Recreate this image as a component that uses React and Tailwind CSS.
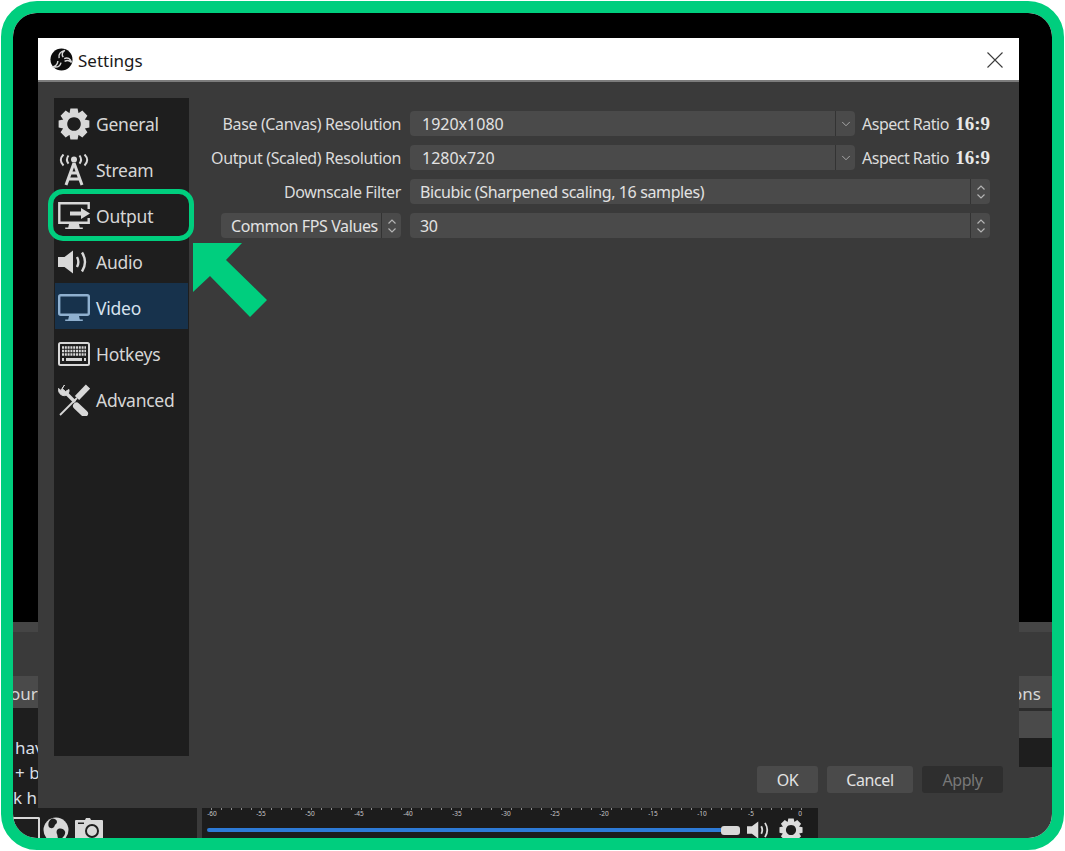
import { ChevronDown } from "lucide-react"

const font = { fontFamily: '"Noto Sans", "Open Sans", sans-serif' }

// 8 toothed gear, same shape in the sidebar and under the mixer
const gearPath = () => {
  const pts = []
  for (let i = 0; i < 8; i++) {
    const a = (i * Math.PI) / 4
    const list = [[-0.4, 11.6], [-0.23, 15.8], [0.23, 15.8], [0.4, 11.6]]
    list.forEach(([d, r]) => {
      pts.push(`${(16 + r * Math.sin(a + d)).toFixed(2)} ${(16 - r * Math.cos(a + d)).toFixed(2)}`)
    })
  }
  return `M${pts.join("L")}Z M16 9.2a6.8 6.8 0 1 0 .01 0Z`
}

const Gear = ({ className }) => (
  <svg viewBox="0 0 32 32" className={className}>
    <path d={gearPath()} fill="currentColor" fillRule="evenodd" />
  </svg>
)

const StreamIcon = () => (
  <svg viewBox="0 0 32 32" className="w-[32px] h-[32px]" fill="none" stroke="currentColor">
    <circle cx="16" cy="5.5" r="3" fill="currentColor" stroke="none" />
    <path d="M10.5 1.5c-2 2.6-2 5.6 0 8.2M21.5 1.5c2 2.6 2 5.6 0 8.2" strokeWidth="2" />
    <path d="M5.5 .5c-3.6 3.6-3.6 7.4 0 11M26.5 .5c3.6 3.6 3.6 7.4 0 11" strokeWidth="2" />
    <path d="M16 9 8 31M16 9l8 22M10.5 25h11M12.5 19h7" strokeWidth="3" />
  </svg>
)

const OutputIcon = () => (
  <svg viewBox="0 0 32 28" className="w-[32px] h-[28px]" fill="none">
    <path d="M30.7 7V1.3H1.3v19.4h29.4V16" stroke="currentColor" strokeWidth="2.4" />
    <path d="M11 22h10l.8 3.5h3V27H7.2v-1.5h3Z" fill="currentColor" />
    <path d="M12 9.5h11V6l9 5.5-9 5.5v-3.5H12Z" fill="currentColor" />
  </svg>
)

const AudioIcon = ({ className = "w-[32px] h-[26px]" }) => (
  <svg viewBox="0 0 32 26" className={className} fill="none">
    <path d="M0 8h6.5L15 1.5v23L6.5 18H0Z" fill="currentColor" />
    <path d="M19 8c1.8 3.3 1.8 6.7 0 10M24 3.5c3.8 6 3.8 13 0 19" stroke="currentColor" strokeWidth="2.4" />
  </svg>
)

const VideoIcon = () => (
  <svg viewBox="0 0 32 28" className="w-[32px] h-[28px]" fill="none">
    <rect x="1.2" y="1.2" width="29.6" height="19.6" rx="1.5" stroke="currentColor" strokeWidth="2.4" />
    <path d="M11 22h10l.8 3.5h3V27H7.2v-1.5h3Z" fill="currentColor" />
  </svg>
)

const KeyboardIcon = () => (
  <svg viewBox="0 0 32 24" className="w-[32px] h-[24px]" fill="none">
    <rect x="1" y="1" width="30" height="22" rx="1.5" stroke="currentColor" strokeWidth="2" />
    <path d="M4 5.5h24M4 9h24M4 12.5h24" stroke="currentColor" strokeWidth="2.4" strokeDasharray="2 .8" />
    <path d="M8 17.5h16M4 17.5h2M26 17.5h2" stroke="currentColor" strokeWidth="2.8" />
  </svg>
)

const ToolsIcon = () => (
  <svg viewBox="0 0 32 32" className="w-[32px] h-[32px]" fill="none">
    <path d="M30 2.5 19 14" stroke="currentColor" strokeWidth="6" />
    <path d="M19 14 2 31" stroke="currentColor" strokeWidth="1.8" />
    <path d="M18.5 22 26.5 29.5" stroke="currentColor" strokeWidth="7" strokeLinecap="round" />
    <path d="M9 10 17 18" stroke="currentColor" strokeWidth="3.4" />
    <path d="M6.5 1 4 4.5 7.5 7.5 11 5.5C11.5 9 9 12.5 5 11.5 1.5 10.5 .2 7.5 .5 4.5L3 6.5Z" fill="currentColor" stroke="currentColor" strokeWidth="1" strokeLinejoin="round" />
  </svg>
)

const ObsLogo = () => (
  <svg viewBox="0 0 24 24" className="w-[23px] h-[23px]">
    <circle cx="12" cy="12" r="11.5" fill="#0c0c0c" />
    <path d="M9.5 10.5C8.5 6.5 11 3.5 15.5 2.5 12.5 4.5 12 7 13.8 9.5" fill="none" stroke="#d8d8d8" strokeWidth="1.5" />
    <path d="M14.8 11C18.5 9.5 21 11 22.5 15 20 12.5 17.5 12.5 15.2 14" fill="none" stroke="#d8d8d8" strokeWidth="1.5" />
    <path d="M11.5 15.2C10.5 19 7.5 20.5 3.5 19.5 6.5 18.5 8 16.5 8.2 13.5" fill="none" stroke="#d8d8d8" strokeWidth="1.5" />
  </svg>
)

const Spinner = () => (
  <svg viewBox="0 0 10 16" className="w-[10px] h-[16px]" fill="none" stroke="#b4b4b4" strokeWidth="1.2">
    <path d="M1.5 5.5 5 2l3.5 3.5M1.5 10.5 5 14l3.5-3.5" />
  </svg>
)

const navItems = [
  { label: "General", icon: <Gear className="w-[32px] h-[32px]" /> },
  { label: "Stream", icon: <StreamIcon /> },
  { label: "Output", icon: <OutputIcon /> },
  { label: "Audio", icon: <AudioIcon /> },
  { label: "Video", icon: <VideoIcon />, active: true },
  { label: "Hotkeys", icon: <KeyboardIcon /> },
  { label: "Advanced", icon: <ToolsIcon /> },
]

const Sidebar = () => (
  <div className="w-[135px] bg-[#1e1e1e] pt-[1px] px-[1px] shrink-0">
    {navItems.map((item) => (
      <div
        key={item.label}
        className={`h-[46px] pt-[4px] flex items-center gap-[6px] pl-[3px] text-[17.5px] tracking-[-0.25px] ${item.active ? "bg-[#17324c]" : "text-[#d6d6d6]"}`}
      >
        <span className={`w-[32px] flex justify-center ${item.active ? "text-[#8fb0cf]" : "text-[#d8d8d8]"}`}>{item.icon}</span>
        <span className={item.active ? "text-[#d6e2ee]" : ""}>{item.label}</span>
      </div>
    ))}
  </div>
)

const Label = ({ children }) => (
  <div className="h-[25px] flex items-center justify-end text-[16px] tracking-[-0.38px] text-[#dcdcdc] whitespace-nowrap">{children}</div>
)

const Resolution = ({ value }) => (
  <div className="h-[25px] flex items-center">
    <div className="w-[445px] h-[25px] bg-[#4a4a4a] rounded-[4px] flex items-center text-[16px] text-[#e2e2e2]">
      <span className="flex-1 pl-[12px]">{value}</span>
      <span className="w-[20px] h-full border-l border-[#333333] flex items-center justify-center">
        <ChevronDown size={14} color="#b4b4b4" strokeWidth={1.5} />
      </span>
    </div>
    <div className="ml-[7px] w-[128px] h-[25px] flex justify-between items-center text-[16px] leading-none text-[#dcdcdc] whitespace-nowrap">
      <span className="tracking-[-0.5px]">Aspect Ratio</span>
      <b className="text-[19px] leading-none text-[#e8e8e8]" style={{ fontFamily: '"Liberation Serif", serif' }}>16:9</b>
    </div>
  </div>
)

const SpinField = ({ value }) => (
  <div className="h-[25px] bg-[#4a4a4a] rounded-[4px] flex items-center text-[16px] tracking-[-0.38px] text-[#e2e2e2]">
    <span className="flex-1 pl-[10px] whitespace-nowrap">{value}</span>
    <span className="w-[20px] h-full border-l border-[#333333] flex items-center justify-center">
      <Spinner />
    </span>
  </div>
)

const Dialog = () => (
  <div className="absolute left-[38px] top-[38px] w-[981px] h-[770px] flex flex-col bg-[#3a3a3a]">
    <div className="h-[44px] pt-[1px] bg-white border-b-2 border-[#7c7c7c] flex items-center pl-[12px] pr-[16px] shrink-0">
      <ObsLogo />
      <span className="ml-[5px] mt-[2px] text-[17px] text-[#1a1a1a]">Settings</span>
      <svg viewBox="0 0 16 16" className="ml-auto w-[16px] h-[16px]" fill="none" stroke="#3c3c3c" strokeWidth="1.1">
        <path d="M.5.5l15 15M15.5.5l-15 15" />
      </svg>
    </div>
    <div className="flex-1 flex pl-[16px] pt-[16px] pb-[52px]">
      <Sidebar />
      <div className="pl-[21px] pt-[13px]">
        <div className="grid grid-cols-[191px_580px] auto-rows-[25px] gap-x-[9px] gap-y-[9px]">
          <Label>Base (Canvas) Resolution</Label>
          <Resolution value="1920x1080" />
          <Label>Output (Scaled) Resolution</Label>
          <Resolution value="1280x720" />
          <Label>Downscale Filter</Label>
          <SpinField value="Bicubic (Sharpened scaling, 16 samples)" />
          <div className="w-[180px] justify-self-end">
            <SpinField value="Common FPS Values" />
          </div>
          <SpinField value="30" />
        </div>
      </div>
    </div>
    <div className="absolute right-[16px] bottom-[15px] flex gap-[9px] text-[16px] tracking-[-0.4px]">
      <div className="w-[61px] h-[27px] bg-[#4a4a4a] rounded-[3px] flex items-center justify-center text-[#e2e2e2]">OK</div>
      <div className="w-[86px] h-[27px] bg-[#4a4a4a] rounded-[3px] flex items-center justify-center text-[#e2e2e2]">Cancel</div>
      <div className="w-[81px] h-[27px] bg-[#2e2e2e] rounded-[3px] flex items-center justify-center text-[#787878]">Apply</div>
    </div>
  </div>
)

const meterLabels = ["-60", "-55", "-50", "-45", "-40", "-35", "-30", "-25", "-20", "-15", "-10", "-5", "0"]

const Mixer = () => (
  <div className="w-[616px] bg-[#1c1c1c] flex flex-col justify-end text-[#c8c8c8]">
    <div className="h-[2px] mx-[9px] bg-[repeating-linear-gradient(90deg,#8a8a8a_0,#8a8a8a_1px,transparent_1px,transparent_10px)]"></div>
    <div className="flex justify-between pl-[4px] pr-[12px] mb-[3px] text-[6.5px] leading-[8px]">
      {meterLabels.map((l) => (
        <span key={l} className="w-[12px] text-center">{l}</span>
      ))}
    </div>
    <div className="flex items-center h-[18px] pl-[5px] -mb-[1px]">
      <div className="w-[514px] h-[4px] bg-[#2d7ad6] rounded-l-[2px]"></div>
      <div className="w-[19px] h-[9px] bg-[#d8d8d8] rounded-[3px]"></div>
      <span className="ml-[7px] text-[#dcdcdc]"><AudioIcon className="w-[24px] h-[20px]" /></span>
      <span className="ml-[8px] text-[#dcdcdc]"><Gear className="w-[24px] h-[24px]" /></span>
    </div>
  </div>
)

const Background = () => (
  <div className="w-full h-full flex flex-col text-[#d6d6d6] text-[17px]">
    <div className="h-[609px] bg-black shrink-0"></div>
    <div className="h-[10px] bg-[#454545] shrink-0"></div>
    <div className="h-[44px] bg-[#3a3a3a] shrink-0"></div>
    <div className="h-[32px] pt-[3px] bg-[#4a4a4a] flex items-center justify-between shrink-0 pr-[11px]">
      <span className="-ml-[3px]">ources</span>
      <span>ons</span>
    </div>
    <div className="flex-1 flex min-h-0">
      <div className="w-[184px] bg-[#1e1e1e] flex flex-col overflow-hidden">
        <div className="pt-[27px] pl-[2px] leading-[25px] whitespace-nowrap text-[#d8dfe6]">
          <div>have</div>
          <div>+ b</div>
          <div className="-ml-[2px]">k h</div>
        </div>
        <div className="mt-[7px] flex items-start gap-[3px] text-[#d8d8d8]">
          <div className="w-[27px] h-[24px] border-2 border-l-0 border-[#d8d8d8] rounded-tr-[2px] shrink-0"></div>
          <svg viewBox="0 0 26 26" className="w-[26px] h-[26px] shrink-0">
            <circle cx="13" cy="13" r="12.5" fill="#d8d8d8" />
            <path d="M9 1.5c3 0 5 1.5 5 3.5s-2 2-2.5 4-3 3-5 1.5S5 3.5 9 1.5ZM15 12c3-1 6 0 7 2.5s-2 7-5 7.5-2-3-3-5 0-4.5 1-5Z" fill="#1e1e1e" />
          </svg>
          <svg viewBox="0 0 30 24" className="ml-[2px] w-[30px] h-[24px] shrink-0">
            <path d="M2 3h9l1-2h4l1 2h11a1 1 0 0 1 1 1v20H1V4a1 1 0 0 1 1-1Z" fill="#d8d8d8" />
            <rect x="4" y="5.5" width="6" height="1.5" fill="#1e1e1e" />
            <circle cx="18" cy="14" r="6" fill="none" stroke="#1e1e1e" strokeWidth="2" />
          </svg>
        </div>
      </div>
      <div className="w-[5px] bg-[#3a3a3a]"></div>
      <Mixer />
      <div className="flex-1 bg-[#3a3a3a] flex flex-col">
        <div className="h-[3px] bg-[#2c2c2c]"></div>
        <div className="h-[27px] bg-[#4a4a4a]"></div>
        <div className="h-[29px] bg-[#1e1e1e]"></div>
      </div>
    </div>
  </div>
)

export default function App() {
  return (
    <div className="relative w-[1065px] h-[851px] bg-white overflow-hidden" style={font}>
      <div className="absolute inset-[1px] border-[12px] border-[#00ce7e] rounded-[36px] overflow-hidden">
        <div className="w-full h-full rounded-[22px] overflow-hidden">
          <Background />
        </div>
      </div>
      <Dialog />
      {/* callout drawn over the screenshot */}
      <div className="absolute left-[48px] top-[189px] w-[146px] h-[52px] border-[5px] border-[#00ce7e] rounded-[15px]"></div>
      <svg viewBox="0 0 1065 851" className="absolute inset-0 w-[1065px] h-[851px] pointer-events-none">
        <polygon points="193,243 242,243 226,260 267,300 250,317 210,276 193,292" fill="#00ce7e" />
      </svg>
    </div>
  )
}
